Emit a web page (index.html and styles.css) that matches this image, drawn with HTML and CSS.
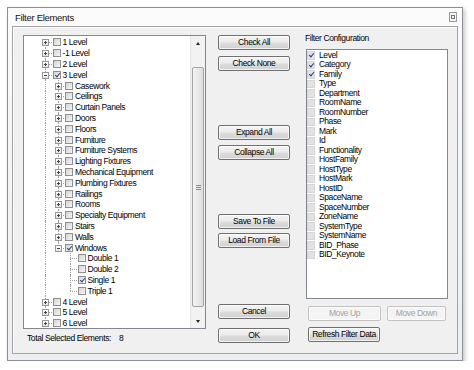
FILE: index.html
```html
<!DOCTYPE html>
<html lang="en">
<head>
  <meta charset="UTF-8">
  <title>Filter Elements</title>
  <link rel="stylesheet" href="styles.css">
</head>
<body>

<div class="win">
  <!-- Title bar -->
  <div class="titlebar">
    <span class="title">Filter Elements</span>
    <span class="close"></span>
  </div>

  <div class="client">
    <!-- Left: element tree -->
    <div class="left">
      <div class="tree">
        <div class="tree-body">
          <div class="node"><i class="tw first"><b class="exp"></b></i><i class="cb"></i><span>1 Level</span></div>
          <div class="node"><i class="tw"><b class="exp"></b></i><i class="cb"></i><span>-1 Level</span></div>
          <div class="node"><i class="tw"><b class="exp"></b></i><i class="cb"></i><span>2 Level</span></div>
          <div class="node"><i class="tw"><b class="exp open"></b></i><i class="cb on"></i><span>3 Level</span></div>

          <div class="node"><i class="ind v"></i><i class="tw"><b class="exp"></b></i><i class="cb"></i><span>Casework</span></div>
          <div class="node"><i class="ind v"></i><i class="tw"><b class="exp"></b></i><i class="cb"></i><span>Ceilings</span></div>
          <div class="node"><i class="ind v"></i><i class="tw"><b class="exp"></b></i><i class="cb"></i><span>Curtain Panels</span></div>
          <div class="node"><i class="ind v"></i><i class="tw"><b class="exp"></b></i><i class="cb"></i><span>Doors</span></div>
          <div class="node"><i class="ind v"></i><i class="tw"><b class="exp"></b></i><i class="cb"></i><span>Floors</span></div>
          <div class="node"><i class="ind v"></i><i class="tw"><b class="exp"></b></i><i class="cb"></i><span>Furniture</span></div>
          <div class="node"><i class="ind v"></i><i class="tw"><b class="exp"></b></i><i class="cb"></i><span>Furniture Systems</span></div>
          <div class="node"><i class="ind v"></i><i class="tw"><b class="exp"></b></i><i class="cb"></i><span>Lighting Fixtures</span></div>
          <div class="node"><i class="ind v"></i><i class="tw"><b class="exp"></b></i><i class="cb"></i><span>Mechanical Equipment</span></div>
          <div class="node"><i class="ind v"></i><i class="tw"><b class="exp"></b></i><i class="cb"></i><span>Plumbing Fixtures</span></div>
          <div class="node"><i class="ind v"></i><i class="tw"><b class="exp"></b></i><i class="cb"></i><span>Railings</span></div>
          <div class="node"><i class="ind v"></i><i class="tw"><b class="exp"></b></i><i class="cb"></i><span>Rooms</span></div>
          <div class="node"><i class="ind v"></i><i class="tw"><b class="exp"></b></i><i class="cb"></i><span>Specialty Equipment</span></div>
          <div class="node"><i class="ind v"></i><i class="tw"><b class="exp"></b></i><i class="cb"></i><span>Stairs</span></div>
          <div class="node"><i class="ind v"></i><i class="tw"><b class="exp"></b></i><i class="cb"></i><span>Walls</span></div>
          <div class="node"><i class="ind v"></i><i class="tw last"><b class="exp open"></b></i><i class="cb on"></i><span>Windows</span></div>

          <div class="node"><i class="ind v"></i><i class="ind"></i><i class="tw"></i><i class="cb"></i><span>Double 1</span></div>
          <div class="node"><i class="ind v"></i><i class="ind"></i><i class="tw"></i><i class="cb"></i><span>Double 2</span></div>
          <div class="node"><i class="ind v"></i><i class="ind"></i><i class="tw"></i><i class="cb on"></i><span>Single 1</span></div>
          <div class="node"><i class="ind v"></i><i class="ind"></i><i class="tw last"></i><i class="cb"></i><span>Triple 1</span></div>

          <div class="node"><i class="tw"><b class="exp"></b></i><i class="cb"></i><span>4 Level</span></div>
          <div class="node"><i class="tw"><b class="exp"></b></i><i class="cb"></i><span>5 Level</span></div>
          <div class="node"><i class="tw last"><b class="exp"></b></i><i class="cb"></i><span>6 Level</span></div>
        </div>

        <div class="vscroll">
          <div class="sb-btn"><i class="arrow up"></i></div>
          <div class="sb-track">
            <div class="thumb"><i class="grip"></i></div>
          </div>
          <div class="sb-btn"><i class="arrow down"></i></div>
        </div>
      </div>
      <div class="total"><span class="total-label">Total Selected Elements:</span>8</div>
    </div>

    <!-- Middle: action buttons -->
    <div class="actions">
      <button class="btn check-all">Check All</button>
      <button class="btn check-none">Check None</button>
      <button class="btn expand">Expand All</button>
      <button class="btn collapse">Collapse All</button>
      <button class="btn save">Save To File</button>
      <button class="btn load">Load From File</button>
      <button class="btn cancel">Cancel</button>
      <button class="btn ok">OK</button>
    </div>

    <!-- Right: filter configuration -->
    <div class="config">
      <div class="config-label">Filter Configuration</div>
      <div class="checklist">
        <div class="item"><i class="lcb on"></i>Level</div>
        <div class="item"><i class="lcb on"></i>Category</div>
        <div class="item"><i class="lcb on"></i>Family</div>
        <div class="item"><i class="lcb"></i>Type</div>
        <div class="item"><i class="lcb"></i>Department</div>
        <div class="item"><i class="lcb"></i>RoomName</div>
        <div class="item"><i class="lcb"></i>RoomNumber</div>
        <div class="item"><i class="lcb"></i>Phase</div>
        <div class="item"><i class="lcb"></i>Mark</div>
        <div class="item"><i class="lcb"></i>Id</div>
        <div class="item"><i class="lcb"></i>Functionality</div>
        <div class="item"><i class="lcb"></i>HostFamily</div>
        <div class="item"><i class="lcb"></i>HostType</div>
        <div class="item"><i class="lcb"></i>HostMark</div>
        <div class="item"><i class="lcb"></i>HostID</div>
        <div class="item"><i class="lcb"></i>SpaceName</div>
        <div class="item"><i class="lcb"></i>SpaceNumber</div>
        <div class="item"><i class="lcb"></i>ZoneName</div>
        <div class="item"><i class="lcb"></i>SystemType</div>
        <div class="item"><i class="lcb"></i>SystemName</div>
        <div class="item"><i class="lcb"></i>BID_Phase</div>
        <div class="item"><i class="lcb"></i>BID_Keynote</div>
      </div>
      <div class="move-row">
        <button class="btn move-up" disabled>Move Up</button>
        <button class="btn move-down" disabled>Move Down</button>
      </div>
      <button class="btn refresh">Refresh Filter Data</button>
    </div>
  </div>
</div>

</body>
</html>
```

FILE: styles.css
```css
/* Page */
body {
  margin: 0;
  background: #fff;
  font-family: "Liberation Sans", Arial, sans-serif;
  font-size: 8.5px;
  letter-spacing: -0.4px;
  color: #000;
}

/* Dialog window */
.win {
  margin: 7px 0 0 7px;
  width: 456px;
  height: 354px;
  box-sizing: border-box;
  border: 1px solid #8d9197;
  background: linear-gradient(#fbfbfb, #eceef1);
  box-shadow: 2px 2px 4px rgba(0, 0, 0, 0.22);
  padding: 0 4px 6px 4px;
  display: flex;
  flex-direction: column;
}

.titlebar {
  height: 18px;
  display: flex;
  align-items: center;
  justify-content: space-between;
  padding-left: 3px;
}

.title {
  font-size: 9.5px;
  letter-spacing: -0.3px;
  color: #111;
}

.close {
  width: 8px;
  height: 10px;
  box-sizing: border-box;
  border: 1px solid #9a9a9a;
  background: #f4f4f4;
  margin-right: 1px;
  position: relative;
}

.close::after {
  content: "";
  position: absolute;
  left: 1px;
  top: 2px;
  width: 2px;
  height: 2px;
  border: 1px solid #777;
}

.client {
  flex: 1;
  border: 1px solid #a3a3a3;
  box-shadow: inset 1px 1px 0 #fff;
  background: #f0f0f0;
  display: flex;
  padding: 8px 0 0 10px;
}

/* Tree view */
.left {
  width: 183px;
}

.tree {
  height: 294px;
  box-sizing: border-box;
  border: 1px solid #828790;
  background: #fff;
  display: flex;
}

.tree-body {
  flex: 1;
  padding: 1px 0 0 15px;
}

.node {
  display: flex;
  align-items: center;
  height: 10.8px;
  white-space: nowrap;
}

.ind, .tw {
  align-self: stretch;
  width: 12.5px;
  flex: none;
  position: relative;
}

.ind.v::before,
.tw::before {
  content: "";
  position: absolute;
  left: 6px;
  top: 0;
  bottom: 0;
  border-left: 1px dotted #a0a0a0;
}

.tw.first::before { top: 50%; }
.tw.last::before { bottom: 50%; }

.tw::after {
  content: "";
  position: absolute;
  left: 6px;
  right: 0;
  top: 50%;
  border-top: 1px dotted #a0a0a0;
}

.exp {
  position: absolute;
  z-index: 1;
  left: 3px;
  top: 50%;
  margin-top: -3px;
  width: 7px;
  height: 7px;
  box-sizing: border-box;
  border: 1px solid #979797;
  background:
    linear-gradient(#444, #444) center / 3px 1px no-repeat,
    linear-gradient(#444, #444) center / 1px 3px no-repeat,
    linear-gradient(#fff, #e4e4e4);
}

.exp.open {
  background:
    linear-gradient(#444, #444) center / 3px 1px no-repeat,
    linear-gradient(#fff, #e4e4e4);
}

.cb {
  flex: none;
  width: 8px;
  height: 8px;
  box-sizing: border-box;
  border: 1px solid #8f8f8f;
  background: linear-gradient(135deg, #d4d4d4, #f6f6f6);
  margin-left: 1px;
  margin-right: 2px;
  position: relative;
}

.cb.on::after,
.lcb.on::after {
  content: "";
  position: absolute;
  left: 2px;
  top: 0;
  width: 2px;
  height: 4px;
  border: solid #2c3f86;
  border-width: 0 1px 1px 0;
  transform: rotate(40deg);
}

/* Fake scrollbar */
.vscroll {
  width: 14px;
  background: #f2f2f2;
  border-left: 1px solid #e6e6e6;
  display: flex;
  flex-direction: column;
}

.sb-btn {
  height: 14px;
  display: flex;
  align-items: center;
  justify-content: center;
}

.arrow {
  width: 0;
  height: 0;
  border-left: 2px solid transparent;
  border-right: 2px solid transparent;
}

.arrow.up { border-bottom: 3px solid #222; }
.arrow.down { border-top: 3px solid #222; }

.sb-track {
  flex: 1;
}

.thumb {
  margin: 17px 0 0 1px;
  width: 12px;
  height: 240px;
  box-sizing: border-box;
  border: 1px solid #a4a4a4;
  border-radius: 2px;
  background: linear-gradient(90deg, #f4f4f4, #dedede);
  display: flex;
  align-items: center;
  justify-content: center;
}

.grip {
  width: 5px;
  height: 5px;
  background: repeating-linear-gradient(#8a8a8a 0 1px, transparent 1px 2px);
}

.total {
  margin-top: 4px;
  padding-left: 4px;
  line-height: 11px;
  white-space: nowrap;
}

.total-label {
  display: inline-block;
  width: 92px;
}

/* Buttons */
.btn {
  display: block;
  height: 15px;
  padding: 0;
  box-sizing: border-box;
  border: 1px solid #707070;
  border-radius: 2px;
  background: linear-gradient(#f4f4f4 0%, #ebebeb 48%, #dddddd 52%, #d0d0d0 100%);
  box-shadow: inset 0 0 0 1px rgba(255, 255, 255, 0.7);
  font-family: inherit;
  font-size: 8.5px;
  letter-spacing: -0.4px;
  line-height: 13px;
  white-space: nowrap;
  color: #000;
  text-align: center;
}

.btn:disabled {
  color: #a3a3a3;
  border-color: #c2c2c2;
  background: #f4f4f4;
}

.actions {
  width: 72px;
  margin-left: 12px;
}

.actions .btn { width: 72px; }
.check-none { margin-top: 6px; }
.expand { margin-top: 54px; }
.collapse { margin-top: 5px; }
.save { margin-top: 54px; }
.load { margin-top: 4px; }
.cancel { margin-top: 56px; }
.ok { margin-top: 9px; }

/* Filter configuration */
.config {
  width: 142px;
  margin-left: 16px;
}

.config-label {
  margin: -2px 0 0 -1px;
  line-height: 11px;
  height: 11px;
}

.checklist {
  margin-top: 5px;
  height: 250px;
  box-sizing: border-box;
  border: 1px solid #828790;
  background: #fff;
  padding-top: 0.5px;
}

.item {
  height: 9.5px;
  line-height: 9.5px;
  display: flex;
  align-items: center;
  white-space: nowrap;
}

.lcb {
  flex: none;
  width: 8px;
  height: 8.5px;
  box-sizing: border-box;
  background: #e2e2e2;
  border: 1px solid #d6d6d6;
  margin-right: 4px;
  position: relative;
}

.move-row {
  display: flex;
  gap: 6px;
  margin: 7px 0 0 2px;
}

.move-up { width: 73px; }
.move-down { width: 59px; }

.refresh {
  width: 72px;
  margin: 6px 0 0 2px;
}
```
